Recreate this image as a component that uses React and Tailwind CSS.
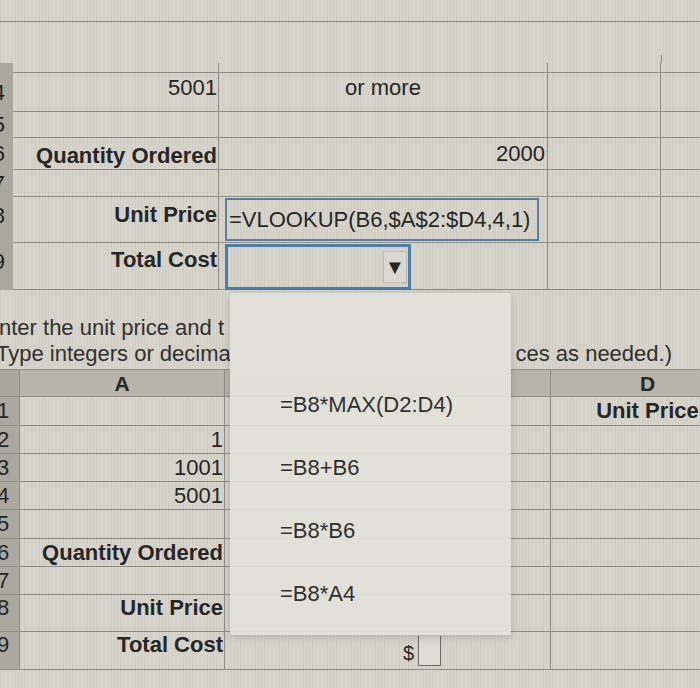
import React from 'react';

const line = 'border-[#8f8d85]';
const font = { fontFamily: '"Liberation Sans", Arial, sans-serif' };

const topRows = [
  { h: 'h-[10px]', n: '', a: null, b: null },
  { h: 'h-[39px]', n: '4', a: <span className="pb-[8px]">5001</span>, b: <span className="w-full text-center pb-[8px]">or more</span> },
  { h: 'h-[26px]', n: '5', a: null, b: null },
  { h: 'h-[32px]', n: '6', a: <span className="font-bold pt-[5px]">Quantity Ordered</span>, b: <span className="w-full text-right pr-[2px]">2000</span> },
  { h: 'h-[27px]', n: '7', a: null, b: null },
  { h: 'h-[46px]', n: '8', top: true, a: <span className="font-bold pt-[7px]">Unit Price</span>, b: 'formula' },
  { h: 'h-[47px]', n: '9', top: true, a: <span className="font-bold pt-[6px]">Total Cost</span>, b: 'dropdown' },
];

const bottomRows = [
  { h: 'h-[29px]', n: '1', a: '', d: 'Unit Price' },
  { h: 'h-[28px]', n: '2', a: '1' },
  { h: 'h-[28px]', n: '3', a: '1001' },
  { h: 'h-[28px]', n: '4', a: '5001' },
  { h: 'h-[29px]', n: '5', a: '' },
  { h: 'h-[28px]', n: '6', a: 'Quantity Ordered', bold: true },
  { h: 'h-[28px]', n: '7', a: '' },
  { h: 'h-[37px]', n: '8', a: 'Unit Price', bold: true, top: true },
  { h: 'h-[38px]', n: '9', a: 'Total Cost', bold: true, top: true, dollar: true },
];

const options = ['=B8*MAX(D2:D4)', '=B8+B6', '=B8*B6', '=B8*A4'];

function TopCellB({ b }) {
  if (b === 'formula') {
    return (
      <div className="ml-[6px] mt-[1px] h-[43px] w-[314px] border-2 border-[#5d7d9b] flex items-center pl-[2px] text-[22px] text-[#262626]">
        =VLOOKUP(B6,$A$2:$D4,4,1)
      </div>
    );
  }
  if (b === 'dropdown') {
    return (
      <div className="ml-[6px] mt-[1px] h-[46px] w-[186px] border-[3px] border-[#4d7ea6] flex items-center justify-end pr-[1px]">
        <div className="h-[32px] w-[24px] border border-[#bcbab2] bg-[#dad8d0] flex items-center justify-center text-[20px] text-[#262626]">
          ▼
        </div>
      </div>
    );
  }
  return b;
}

export default function App() {
  return (
    <div
      className="relative w-[700px] h-[688px] overflow-hidden bg-[#d7d5cb] bg-[repeating-linear-gradient(90deg,rgba(0,0,0,0.035)_0px,rgba(0,0,0,0.035)_1px,transparent_1px,transparent_3px)] text-[#262626] text-[22px] leading-none"
      style={font}
    >
      {/* top band */}
      <div className={`h-[22px] border-b ${line}`} />
      <div className="h-[41px] flex">
        <div className="w-[661px]" />
        <div className={`mt-[33px] border-l ${line}`} />
      </div>

      {/* upper sheet */}
      <div className="flex">
        <div className="w-[13px] bg-[#aba99f] flex flex-col">
          {topRows.map((r, i) => (
            <div key={i} className={`${r.h} flex ${r.top ? 'items-start pt-[8px]' : 'items-center'}`}>
              <div className="w-[5px] overflow-hidden flex justify-end text-[#1f1f1f]">{r.n}</div>
            </div>
          ))}
        </div>
        <div className="flex-1 flex flex-col">
          {topRows.map((r, i) => (
            <div key={i} className={`${r.h} flex border-b ${line}`}>
              <div className={`w-[206px] shrink-0 border-r ${line} flex justify-end pr-[1px] ${r.top ? 'items-start' : 'items-center'}`}>
                {r.a}
              </div>
              <div className={`w-[329px] shrink-0 border-r ${line} flex ${r.top ? 'items-start' : 'items-center'}`}>
                <TopCellB b={r.b} />
              </div>
              <div className={`w-[113px] shrink-0 border-r ${line}`} />
              <div className="flex-1" />
            </div>
          ))}
        </div>
      </div>

      {/* instructions */}
      <div className="pt-[25px] leading-[26px] text-[#303030]">
        <div className="-ml-[1px]">nter the unit price and t</div>
        <div className="flex justify-between pr-[28px]">
          <span className="-ml-[4px]">Type integers or decima</span>
          <span>ces as needed.)</span>
        </div>
      </div>

      {/* lower sheet */}
      <div className="mt-[2px] w-[745px]">
        <div className={`h-[28px] flex border-y ${line}`}>
          <div className={`w-[20px] shrink-0 bg-[#a9a79d] border-r ${line}`} />
          <div className={`w-[205px] shrink-0 bg-[#b7b4a9] border-r ${line} flex items-center justify-center font-bold text-[21px]`}>A</div>
          <div className={`w-[286px] shrink-0 bg-[#b7b4a9] border-r ${line}`} />
          <div className={`w-[40px] shrink-0 bg-[#b7b4a9] border-r ${line}`} />
          <div className={`w-[194px] shrink-0 bg-[#b7b4a9] border-r ${line} flex items-center justify-center font-bold text-[21px]`}>D</div>
        </div>
        {bottomRows.map((r, i) => (
          <div key={i} className={`${r.h} flex border-b ${line}`}>
            <div className={`w-[20px] shrink-0 bg-[#aba99f] border-r ${line} flex ${r.top ? 'items-start pt-[2px]' : 'items-center'}`}>
              <span className="-ml-[3px]">{r.n}</span>
            </div>
            <div className={`w-[205px] shrink-0 border-r ${line} flex justify-end pr-[1px] ${r.top ? 'items-start pt-[2px]' : 'items-center'} ${r.bold ? 'font-bold' : ''}`}>
              {r.a}
            </div>
            <div className="w-[286px] shrink-0 flex items-center justify-end pr-[70px]">
              {r.dollar && (
                <div className="flex items-end gap-[4px]">
                  <span className="text-[20px] pb-[3px]">$</span>
                  <div className="w-[23px] h-[30px] border-x border-b border-[#6e6d68] bg-[#dddbd3]" />
                </div>
              )}
            </div>
            <div className={`w-[40px] shrink-0 border-r ${line}`} />
            <div className={`w-[194px] shrink-0 border-r ${line} flex items-center justify-center font-bold`}>
              {r.d}
            </div>
          </div>
        ))}
      </div>

      {/* dropdown list */}
      <div className="absolute left-[230px] top-[293px] w-[281px] h-[342px] rounded-[3px] bg-[#e3e1d9]/95 shadow-[0_2px_8px_rgba(0,0,0,0.18)] pt-[80px] pl-[50px] flex flex-col text-[#303030]">
        {options.map((o) => (
          <div key={o} className="h-[63px] flex items-center">
            {o}
          </div>
        ))}
      </div>
    </div>
  );
}
